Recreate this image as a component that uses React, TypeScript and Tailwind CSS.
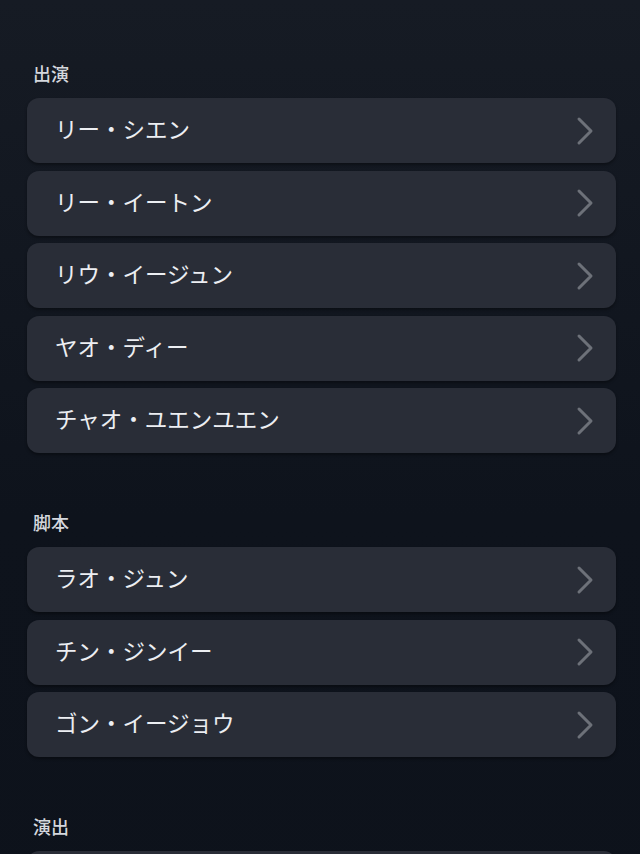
const sections = [
  {
    title: '出演',
    people: ['リー・シエン', 'リー・イートン', 'リウ・イージュン', 'ヤオ・ディー', 'チャオ・ユエンユエン'],
  },
  {
    title: '脚本',
    people: ['ラオ・ジュン', 'チン・ジンイー', 'ゴン・イージョウ'],
  },
  {
    title: '演出',
    people: ['ジャン・ジアジュン', 'リウ・ハイボー'],
  },
]

const font = { fontFamily: '"Noto Sans CJK JP", "Noto Sans", sans-serif' }

function Chevron() {
  return (
    <svg width="20" height="30" viewBox="0 0 20 30" fill="none" className="shrink-0">
      <path
        d="M4 3 L16 15 L4 27"
        stroke="#6d7179"
        strokeWidth="3"
        strokeLinecap="round"
        strokeLinejoin="round"
      />
    </svg>
  )
}

export default function App() {
  return (
    <div
      className="min-h-screen bg-gradient-to-b from-[#161b24] via-[#0e131c] to-[#0d121b] pl-[27px] pr-[24px] pt-[61px] pb-10"
      style={font}
    >
      <div className="flex flex-col gap-[57px]">
        {sections.map((section) => (
          <section key={section.title}>
            <h2 className="px-[6px] text-[18px] leading-[24px] font-medium text-[#d4d7dd]">
              {section.title}
            </h2>
            <div className="mt-[13px] flex flex-col gap-[7.5px]">
              {section.people.map((name) => (
                <button
                  key={name}
                  className="flex h-[65px] w-full items-center justify-between rounded-[12px] bg-[#292d37] pl-[28px] pr-[21px] shadow-[0_2px_3px_rgba(0,0,0,0.35)]"
                >
                  <span className="pb-[4px] text-[22.5px] leading-none text-[#eceef2]">{name}</span>
                  <Chevron />
                </button>
              ))}
            </div>
          </section>
        ))}
      </div>
    </div>
  )
}
